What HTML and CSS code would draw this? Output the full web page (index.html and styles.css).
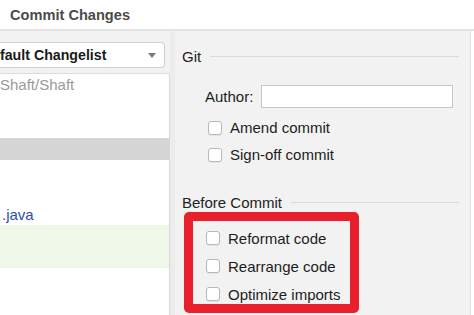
FILE: index.html
```html
<!DOCTYPE html>
<html>
<head>
<meta charset="utf-8">
<link rel="stylesheet" href="styles.css">
</head>
<body>
<div class="titlebar"><span class="title">Commit Changes</span></div>
<div class="main">
  <div class="left">
    <div class="dropdown">
      <span class="dd-text">fault Changelist</span>
      <span class="dd-arrow"></span>
    </div>
    <div class="list">
      <div class="row row-path">Shaft/Shaft</div>
      <div class="row gap43"></div>
      <div class="row row-sel"></div>
      <div class="row gap44"></div>
      <div class="row row-file">.java</div>
      <div class="row row-green"></div>
    </div>
  </div>
  <div class="splitter"></div>
  <div class="right">
    <div class="section-head"><span>Git</span><span class="rule"></span></div>
    <div class="author">
      <span class="label">Author:</span>
      <span class="input"></span>
    </div>
    <div class="checks">
      <div class="check"><span class="box"></span><span>Amend commit</span></div>
      <div class="check"><span class="box"></span><span>Sign-off commit</span></div>
    </div>
    <div class="section-head before"><span>Before Commit</span><span class="rule"></span></div>
    <div class="highlight">
      <div class="check"><span class="box"></span><span>Reformat code</span></div>
      <div class="check"><span class="box"></span><span>Rearrange code</span></div>
      <div class="check"><span class="box"></span><span>Optimize imports</span></div>
    </div>
  </div>
</div>
</body>
</html>
```
FILE: styles.css
```css
html, body {
  margin: 0;
  padding: 0;
}
body {
  width: 474px;
  height: 315px;
  overflow: hidden;
  background: #ffffff;
  font-family: "Liberation Sans", Arial, sans-serif;
  font-size: 15px;
  color: #1d1d1d;
}
.titlebar {
  height: 29px;
  background: #ffffff;
  border-bottom: 2px solid #e3e3e3;
  display: flex;
  align-items: center;
  padding-left: 10px;
}
.title {
  font-weight: bold;
  font-size: 14.6px;
  color: #4b4b4b;
}
.main {
  width: 470px;
  height: 284px;
  background: #f2f2f2;
  border-right: 1px solid #e2e2e2;
  display: flex;
}
.left {
  width: 170px;
  display: flex;
  flex-direction: column;
  padding-top: 11px;
}
.dropdown {
  width: 165px;
  height: 26px;
  box-sizing: border-box;
  background: #ffffff;
  border: 1px solid #cfcfcf;
  border-left: none;
  border-radius: 0 4px 4px 0;
  display: flex;
  align-items: center;
  justify-content: space-between;
  padding-right: 8px;
}
.dd-text {
  font-weight: bold;
  font-size: 14.2px;
  color: #1a1a1a;
}
.dd-arrow {
  width: 0;
  height: 0;
  border-left: 4px solid transparent;
  border-right: 4px solid transparent;
  border-top: 5px solid #7a7a7a;
}
.list {
  margin-top: 5px;
  flex: 1;
  background: #ffffff;
  border-top: 1px solid #dcdcdc;
  border-right: 1px solid #d8d8d8;
  display: flex;
  flex-direction: column;
}
.row {
  display: flex;
  align-items: center;
}
.row-path {
  height: 21px;
  color: #9a9a9a;
}
.gap43 { height: 43px; }
.row-sel {
  height: 22px;
  background: #d6d6d6;
}
.gap44 { height: 44px; }
.row-file {
  height: 21px;
  color: #2b4ea6;
  padding-left: 2px;
}
.row-green {
  height: 43px;
  background: #eff8e8;
}
.splitter {
  width: 5px;
  background: #ececec;
}
.right {
  flex: 1;
  display: flex;
  flex-direction: column;
  padding-left: 7px;
  padding-top: 16px;
}
.section-head {
  height: 18px;
  display: flex;
  align-items: center;
  gap: 9px;
  color: #222222;
}
.rule {
  flex: 1;
  height: 1px;
  background: #d9d9d9;
  margin-right: 11px;
}
.author {
  margin-top: 20px;
  display: flex;
  align-items: center;
  gap: 8px;
  padding-left: 23px;
}
.label { color: #1d1d1d; }
.input {
  width: 192px;
  height: 23px;
  box-sizing: border-box;
  background: #ffffff;
  border: 1px solid #c6c6c6;
}
.checks {
  margin-top: 6px;
  padding-left: 26px;
  display: flex;
  flex-direction: column;
}
.checks .check { height: 27px; }
.check {
  display: flex;
  align-items: center;
  gap: 8px;
}
.box {
  width: 14px;
  height: 14px;
  box-sizing: border-box;
  background: #ffffff;
  border: 1px solid #b9b9b9;
  border-radius: 3px;
  box-shadow: 0 1px 1px rgba(0,0,0,0.06);
}
.before {
  margin-top: 25px;
}
.highlight {
  margin-top: 1px;
  margin-left: 2px;
  width: 175px;
  height: 101px;
  box-sizing: border-box;
  border: 9px solid #e8202b;
  border-radius: 5px;
  padding-top: 3px;
  padding-left: 13px;
  display: flex;
  flex-direction: column;
}
.highlight .check {
  height: 28px;
  flex-shrink: 0;
}
```
